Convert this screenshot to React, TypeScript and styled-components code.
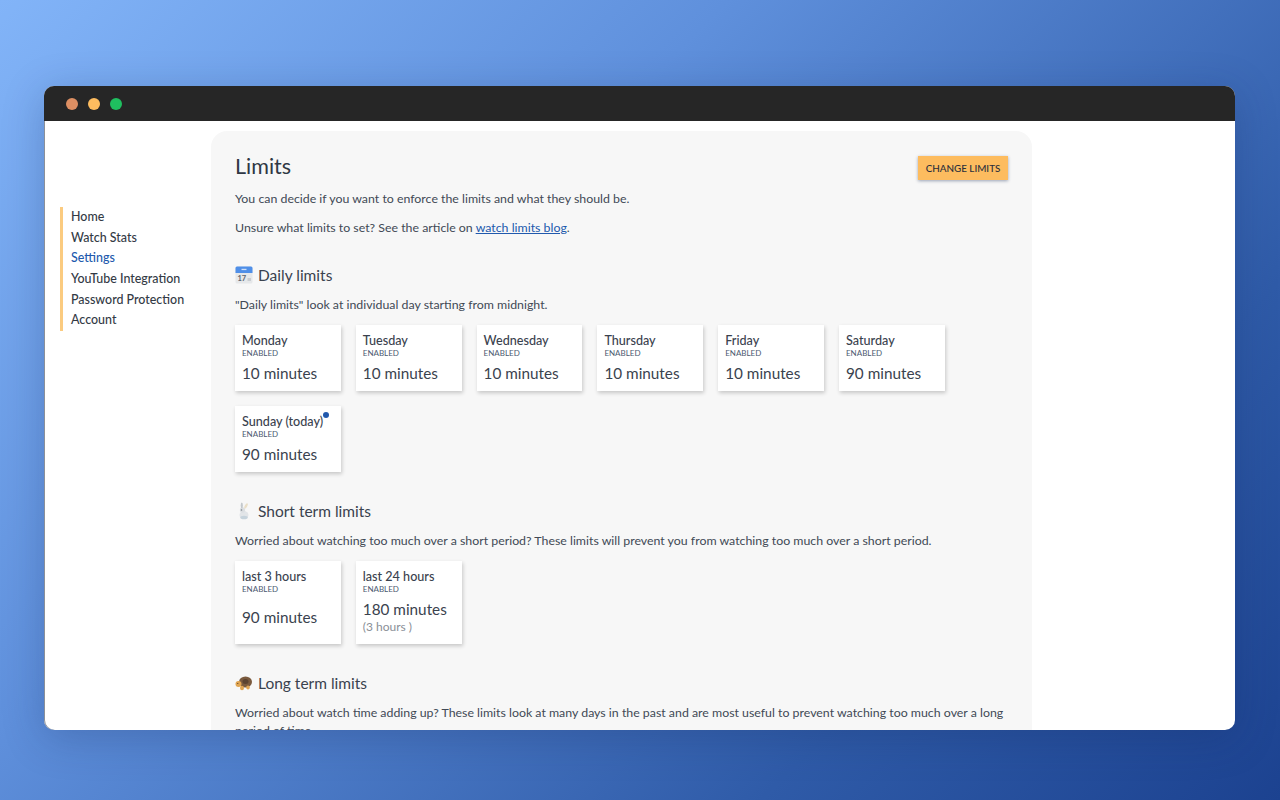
import React from "react";
import styled, { createGlobalStyle } from "styled-components";

const GlobalStyle = createGlobalStyle`
  html, body { margin: 0; padding: 0; height: 100%; overflow: hidden; }
  body { font-family: "Lato", "Open Sans", sans-serif; color: #374151; }
`;

const dailyLimits = [
  { name: "Monday", value: "10 minutes" },
  { name: "Tuesday", value: "10 minutes" },
  { name: "Wednesday", value: "10 minutes" },
  { name: "Thursday", value: "10 minutes" },
  { name: "Friday", value: "10 minutes" },
  { name: "Saturday", value: "90 minutes" },
  { name: "Sunday (today)", value: "90 minutes", today: true },
];

const navItems = ["Home", "Watch Stats", "Settings", "YouTube Integration", "Password Protection", "Account"];

const CalendarIcon = () => (
  <svg width="18" height="18" viewBox="0 0 18 18">
    <rect x="0.5" y="0.5" width="17" height="17" rx="1.5" fill="#e6e8ea" />
    <path d="M.5 7V2A1.500 1.500 0 0 1 2 .5h14A1.500 1.500 0 0 1 17.500 2v5z" fill="#4f8fe8" />
    <rect x="6.500" y="2.800" width="5" height="1.300" fill="#cfe0f8" />
    <text x="2.500" y="15" fontSize="7.500" fontWeight="700" fontFamily="Lato, sans-serif" fill="#5d6670">
      17
    </text>
    <rect x="12.500" y="12" width="3.500" height="3" fill="#c9cdd1" />
  </svg>
);

const RabbitIcon = () => (
  <svg width="18" height="20" viewBox="0 0 18 20">
    <ellipse cx="9" cy="14" rx="4.500" ry="4" fill="#e2e5e8" />
    <ellipse cx="7.500" cy="9" rx="2.600" ry="2.800" fill="#dcdfe2" />
    <ellipse cx="6.800" cy="4.500" rx="1.100" ry="3" fill="#c4c9cd" />
    <ellipse cx="11" cy="5" rx="1.200" ry="3" fill="#eadfc8" transform="rotate(32 11 5)" />
    <circle cx="6.500" cy="9" r="0.800" fill="#7d858c" />
    <ellipse cx="9" cy="16.500" rx="3.800" ry="1.800" fill="#c6d3dc" />
  </svg>
);

const TurtleIcon = () => (
  <svg width="18" height="16" viewBox="0 0 18 16">
    <ellipse cx="10.500" cy="7" rx="6.500" ry="5.500" fill="#7a5a3e" />
    <ellipse cx="10.500" cy="6.500" rx="3" ry="2.500" fill="#5b4330" />
    <circle cx="3.500" cy="9" r="3" fill="#e0a552" />
    <circle cx="2.800" cy="8.500" r="0.600" fill="#4a3520" />
    <ellipse cx="7" cy="13" rx="2" ry="2.200" fill="#e0a552" />
    <ellipse cx="13" cy="12.500" rx="1.800" ry="2" fill="#e0a552" />
  </svg>
);

const Limit = ({ name, value, note, today, tall }: { name: string; value: string; note?: string; today?: boolean; tall?: boolean }) => (
  <Card $tall={tall}>
    {today && <TodayDot />}
    <CardName>{name}</CardName>
    <CardState>ENABLED</CardState>
    <CardBody>
      <CardValue>{value}</CardValue>
      {note && <CardNote>{note}</CardNote>}
    </CardBody>
  </Card>
);

const App = () => {
  return (
    <Page>
      <GlobalStyle />
      <Window>
        <TitleBar>
          <Light $color="#dd8f63" />
          <Light $color="#fdbc5f" />
          <Light $color="#1fbf5f" />
        </TitleBar>
        <Body>
          <SideColumn>
            <Nav>
              {navItems.map((item) => (
                <NavItem key={item} $active={item === "Settings"}>
                  {item}
                </NavItem>
              ))}
            </Nav>
          </SideColumn>
          <Panel>
            <PanelHead>
              <Title>Limits</Title>
              <ChangeButton>CHANGE LIMITS</ChangeButton>
            </PanelHead>
            <Intro>You can decide if you want to enforce the limits and what they should be.</Intro>
            <Intro>
              Unsure what limits to set? See the article on <BlogLink href="#">watch limits blog</BlogLink>.
            </Intro>

            <SectionTitle>
              <CalendarIcon />
              Daily limits
            </SectionTitle>
            <SectionText>"Daily limits" look at individual day starting from midnight.</SectionText>
            <CardGrid>
              {dailyLimits.map((d) => (
                <Limit key={d.name} name={d.name} value={d.value} today={d.today} />
              ))}
            </CardGrid>

            <SectionTitle>
              <RabbitIcon />
              Short term limits
            </SectionTitle>
            <SectionText>
              Worried about watching too much over a short period? These limits will prevent you from watching too much
              over a short period.
            </SectionText>
            <CardGrid>
              <Limit name="last 3 hours" value="90 minutes" tall />
              <Limit name="last 24 hours" value="180 minutes" note="(3 hours )" tall />
            </CardGrid>

            <SectionTitle>
              <TurtleIcon />
              Long term limits
            </SectionTitle>
            <SectionText>
              Worried about watch time adding up? These limits look at many days in the past and are most useful to
              prevent watching too much over a long period of time.
            </SectionText>
          </Panel>
        </Body>
      </Window>
    </Page>
  );
};

const Page = styled.div`
  box-sizing: border-box;
  width: 1280px;
  height: 800px;
  padding: 86px 45px 70px 44px;
  background: linear-gradient(135deg, #82b4f8 0%, #5f90dc 35%, #2f5ba8 75%, #1c4290 100%);
`;

const Window = styled.div`
  display: flex;
  flex-direction: column;
  height: 100%;
  border-radius: 10px;
  overflow: hidden;
  background: #fff;
  box-shadow: inset 1px 0 0 #8b9099, 0 8px 40px rgba(20, 40, 90, 0.25);
`;

const TitleBar = styled.div`
  display: flex;
  flex: none;
  align-items: center;
  gap: 10px;
  height: 35px;
  padding-left: 22px;
  background: #262626;
`;

const Light = styled.span<{ $color: string }>`
  width: 12px;
  height: 12px;
  border-radius: 50%;
  background: ${(p) => p.$color};
`;

const Body = styled.div`
  display: flex;
  flex: 1;
  min-height: 0;
`;

const SideColumn = styled.div`
  flex: none;
  width: 167px;
  padding: 86px 0 0 16px;
  box-sizing: border-box;
`;

const Nav = styled.nav`
  display: flex;
  flex-direction: column;
  padding: 0 0 0 8px;
  border-left: 3px solid #fbcb80;
`;

const NavItem = styled.a<{ $active?: boolean }>`
  height: 20.700px;
  line-height: 19px;
  font-size: 12.450px;
  font-weight: 500;
  white-space: nowrap;
  color: ${(p) => (p.$active ? "#2159ad" : "#333a45")};
`;

const Panel = styled.main`
  box-sizing: border-box;
  width: 821px;
  height: 900px;
  margin-top: 10px;
  padding: 24px;
  border-radius: 16px;
  background: #f7f7f7;
`;

const PanelHead = styled.div`
  display: flex;
  align-items: flex-start;
  justify-content: space-between;
  height: 35px;
`;

const Title = styled.h1`
  margin: 0;
  font-size: 21.500px;
  line-height: 23px;
  font-weight: 400;
  color: #2f3744;
`;

const ChangeButton = styled.button`
  width: 90px;
  height: 24px;
  margin-top: 1px;
  padding: 0 0 1px;
  border: 0;
  font-family: inherit;
  font-size: 9.850px;
  font-weight: 500;
  white-space: nowrap;
  color: #2b2f3c;
  background: #fdbc5f;
  box-shadow: 0 1px 3px rgba(40, 60, 100, 0.45);
`;

const Intro = styled.p`
  margin: 0 0 10px;
  font-size: 12.350px;
  line-height: 18.500px;
  color: #414955;
`;

const BlogLink = styled.a`
  color: #2159ad;
  text-decoration: underline;
`;

const SectionTitle = styled.h2`
  display: flex;
  align-items: center;
  gap: 5px;
  height: 24px;
  margin: 26px 0 0;
  font-size: 15.500px;
  font-weight: 400;
  color: #3a424e;
`;

const SectionText = styled.p`
  margin: 9px 0 11px;
  font-size: 12.350px;
  line-height: 18px;
  color: #414955;
`;

const CardGrid = styled.div`
  display: flex;
  flex-wrap: wrap;
  gap: 15px;
  width: 740px;
  padding-bottom: 1px;
`;

const Card = styled.div<{ $tall?: boolean }>`
  position: relative;
  display: flex;
  flex-direction: column;
  box-sizing: border-box;
  width: 105.800px;
  height: ${(p) => (p.$tall ? "83px" : "66px")};
  padding: 9px 7px 5px;
  background: #fff;
  box-shadow: 1px 2px 4px rgba(0, 0, 0, 0.2);
`;

const TodayDot = styled.span`
  position: absolute;
  top: 6px;
  right: 12px;
  width: 6px;
  height: 6px;
  border-radius: 50%;
  background: #2159ad;
`;

const CardName = styled.div`
  font-size: 12.600px;
  line-height: 14px;
  font-weight: 500;
  color: #3a424e;
`;

const CardState = styled.div`
  font-size: 8px;
  line-height: 11px;
  color: #4c5a70;
`;

const CardBody = styled.div`
  display: flex;
  flex: 1;
  flex-direction: column;
  justify-content: center;
`;

const CardValue = styled.div`
  font-size: 15.300px;
  line-height: 20px;
  color: #3a424e;
`;

const CardNote = styled.div`
  margin-bottom: 2px;
  font-size: 12px;
  line-height: 15px;
  color: #8a8f97;
`;

export default App;
